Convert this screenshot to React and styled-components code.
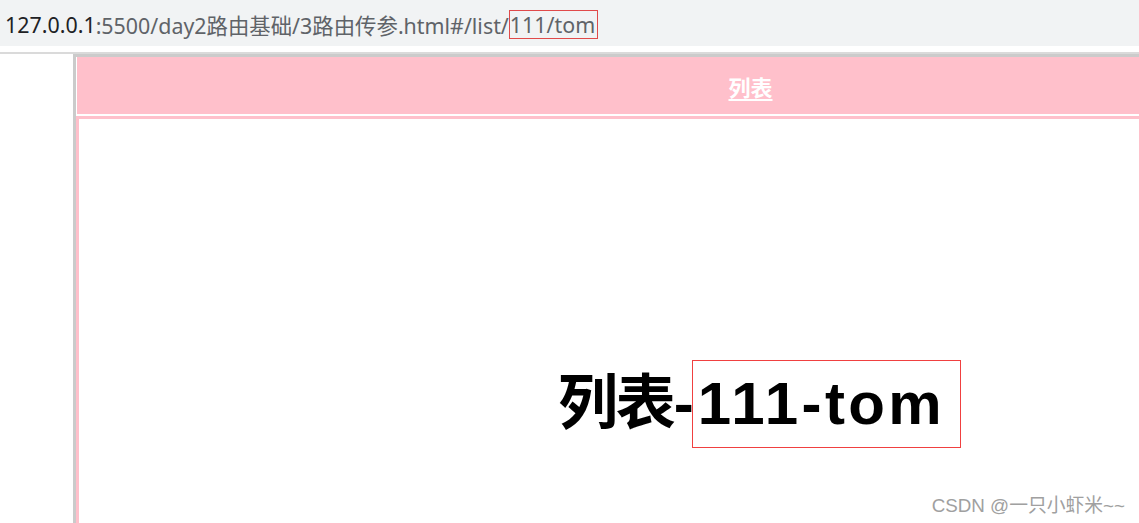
import React from 'react';
import styled, { createGlobalStyle } from 'styled-components';

const GlobalStyle = createGlobalStyle`
  html, body {
    margin: 0;
    padding: 0;
    background: #fff;
    overflow: hidden;
  }
  body {
    font-family: "Noto Sans", "Noto Sans CJK SC", sans-serif;
  }
`;

const Window = styled.div`
  position: relative;
  width: 1139px;
  height: 523px;
  overflow: hidden;
  background: #fff;
`;

const AddressBar = styled.div`
  height: 46px;
  background: #f1f3f4;
  display: flex;
  align-items: center;
  padding: 2px 0 0 5px;
  box-sizing: border-box;
  font-size: 21.4px;
  white-space: nowrap;
  color: #5f6368;
`;

const Host = styled.span`
  color: #202124;
`;

const UrlMark = styled.span`
  display: inline-block;
  border: 1px solid #e04a4a;
  line-height: 27px;
  padding-right: 2px;
`;

const Divider = styled.div`
  margin-top: 6px;
  height: 2px;
  background: #dadada;
`;

const Page = styled.div`
  display: flex;
`;

const Gutter = styled.div`
  width: 73px;
  flex-shrink: 0;
`;

const Frame = styled.div`
  width: 1350px;
  flex-shrink: 0;
  border-top: 3px solid #cbcbcb;
  border-left: 3px solid #cbcbcb;
  height: 480px;
`;

const Header = styled.div`
  margin-left: 1px;
  height: 57px;
  background: #ffc0cb;
  display: flex;
  align-items: center;
  justify-content: center;
  padding-right: 2px;

  a {
    color: #fff;
    font-family: "Liberation Sans", "Noto Sans CJK SC", sans-serif;
    font-weight: 700;
    font-size: 22px;
    text-decoration: underline;
    text-underline-offset: 3px;
  }
`;

const Content = styled.div`
  margin-top: 2px;
  border: 3px solid #ffc0cb;
  height: 420px;
  box-sizing: border-box;
`;

const Title = styled.h1`
  margin: 0;
  padding: 241px 0 0 17px;
  text-align: center;
  font-family: "Liberation Sans", "Noto Sans CJK SC", sans-serif;
  font-weight: 700;
  font-size: 60px;
  line-height: 86px;
  color: #000;
`;

const Prefix = styled.span`
  letter-spacing: -2px;
`;

const Mark = styled.span`
  display: inline-block;
  border: 1px solid #f04040;
  padding: 0 15px 0 5px;
  line-height: 86px;
  letter-spacing: 3.4px;
`;

const Watermark = styled.div`
  position: absolute;
  right: 14px;
  bottom: 6px;
  font-family: "Liberation Sans", "Noto Sans CJK SC", sans-serif;
  font-size: 18.8px;
  color: #a0a0a0;
`;

export default function App() {
  return (
    <Window>
      <GlobalStyle />
      <AddressBar>
        <Host>127.0.0.1</Host>
        <span>:5500/day2路由基础/3路由传参.html#/list/</span>
        <UrlMark>111/tom</UrlMark>
      </AddressBar>
      <Divider />
      <Page>
        <Gutter />
        <Frame>
          <Header>
            <a href="#/list">列表</a>
          </Header>
          <Content>
            <Title>
              <Prefix>列表-</Prefix>
              <Mark>111-tom</Mark>
            </Title>
          </Content>
        </Frame>
      </Page>
      <Watermark>CSDN @一只小虾米~~</Watermark>
    </Window>
  );
}
